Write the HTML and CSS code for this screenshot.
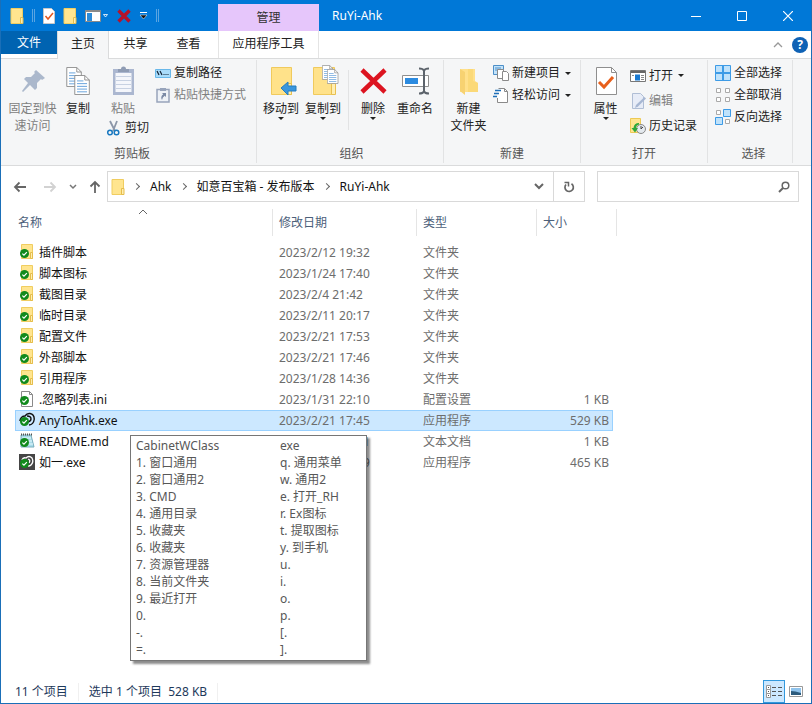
FILE: index.html
```html
<!DOCTYPE html>
<html lang="zh-CN">
<head>
    <meta charset="UTF-8">
    <meta name="viewport" content="width=device-width, initial-scale=1.0">
    <title>RuYi-Ahk</title>
    <link rel="stylesheet" href="styles.css">
</head>
<body>

<!-- Shared icons -->
<svg class="sprite" aria-hidden="true">
    <symbol id="folder" viewBox="0 0 14 16">
        <path d="M1 .5h11.5v15H1z" fill="#ffe58f" stroke="#f0cd60"/>
        <path d="M10.500 9.500h2.500v6h-2.500z" fill="#ffeeb0" stroke="#e5bd4c"/>
    </symbol>
    <symbol id="check" viewBox="0 0 10 10">
        <circle cx="5" cy="5" r="5" fill="#118a1c"/>
        <path d="M2.600 5.200l1.800 1.700 3.200-3.400" fill="none" stroke="#fff" stroke-width="1.300"/>
    </symbol>
    <symbol id="folder-ok" viewBox="0 0 16 16">
        <path d="M2.500 .5h11v14h-11z" fill="#ffe58f" stroke="#f0cd60"/>
        <path d="M11.500 8.500h2v6h-2z" fill="#ffeeb0" stroke="#e5bd4c"/>
        <use href="#check" x="1" y="5" width="9" height="9"/>
    </symbol>
    <symbol id="paper" viewBox="0 0 18 22">
        <path d="M.5 .5h11l5 5v16H.5z" fill="#fff" stroke="#8a8a8a"/>
        <path d="M11.500 .5v5h5" fill="none" stroke="#8a8a8a"/>
        <path d="M3 6.500h7M3 9.500h11M3 12.500h11M3 15.500h11M3 18.500h11" stroke="#5b9ad8"/>
    </symbol>
</svg>

<div class="window">

    <!-- Title bar -->
    <header class="titlebar">
        <div class="quick-access">
            <svg width="14" height="16"><use href="#folder"/></svg>
            <span class="qa-sep"></span>
            <button aria-label="属性">
                <svg width="12" height="16" viewBox="0 0 12 16"><path d="M.5 .5h8l3 3v12H.5z" fill="#fff" stroke="#c8c8c8"/><path d="M2.500 8l2.500 3 5-6" fill="none" stroke="#e2571e" stroke-width="1.500"/></svg>
            </button>
            <button aria-label="新建文件夹">
                <svg width="14" height="16"><use href="#folder"/></svg>
            </button>
            <button aria-label="窗格">
                <svg width="24" height="14" viewBox="0 0 24 14"><path d="M.5 1.500h15v11H.5z" fill="#fff" stroke="#8a8a8a"/><path d="M1 1h14v2H1z" fill="#8a8a8a"/><path d="M2 4h5v8H2z" fill="#2b8bd8"/><path d="M18.500 5.500l2 2.500 2-2.500z" fill="none" stroke="#fff" stroke-width=".8"/></svg>
            </button>
            <button aria-label="删除">
                <svg width="14" height="14" viewBox="0 0 14 14"><path d="M1.500 1.500l11 11M12.500 1.500l-11 11" stroke="#b5122b" stroke-width="3.400"/></svg>
            </button>
            <button aria-label="自定义快速访问工具栏">
                <svg width="9" height="9" viewBox="0 0 9 9"><path d="M1 1.500h7" stroke="#fff"/><path d="M1 4h7L4.500 8z" fill="#111" stroke="#fff" stroke-width=".5"/></svg>
            </button>
            <span class="qa-sep"></span>
        </div>
        <div class="context-tab">管理</div>
        <h1>RuYi-Ahk</h1>
        <div class="window-buttons">
            <button aria-label="最小化"><svg width="10" height="10" viewBox="0 0 10 10"><path d="M0 5.500h10" stroke="#fff"/></svg></button>
            <button aria-label="最大化"><svg width="10" height="10" viewBox="0 0 10 10"><path d="M.5 .5h9v9h-9z" fill="none" stroke="#fff"/></svg></button>
            <button aria-label="关闭"><svg width="10" height="10" viewBox="0 0 10 10"><path d="M0 0l10 10M10 0L0 10" stroke="#fff" stroke-width="1.200"/></svg></button>
        </div>
    </header>

    <!-- Ribbon tabs -->
    <nav class="tabs">
        <button class="tab tab-file">文件</button>
        <button class="tab tab-active">主页</button>
        <button class="tab">共享</button>
        <button class="tab">查看</button>
        <button class="tab tab-tools">应用程序工具</button>
        <div class="tabs-end">
            <button aria-label="最小化功能区"><svg width="10" height="6" viewBox="0 0 10 6"><path d="M1 5l4-4 4 4" fill="none" stroke="#999" stroke-width="1.300"/></svg></button>
            <button class="help" aria-label="帮助">?</button>
        </div>
    </nav>

    <!-- Ribbon -->
    <section class="ribbon">
        <div class="group group-clipboard">
            <div class="group-body">
                <button class="big big-wide" disabled>
                    <svg viewBox="0 0 32 32"><path d="M19 5l9 8-3 2-1-1-4 4v5l-2 2-5-5-7 7-1-1 6-8-4-4 2-2h5l4-4-1-1z" fill="#a4b2c8"/></svg>
                    <span>固定到快<br>速访问</span>
                </button>
                <button class="big">
                    <svg viewBox="0 0 32 32"><use href="#paper" x="4" y="2" width="17" height="20"/><use href="#paper" x="12" y="10" width="17" height="20"/></svg>
                    <span>复制</span>
                </button>
                <div class="stack stack-paste">
                    <button class="big" disabled>
                        <svg viewBox="0 0 32 32"><path d="M6 4h21v26H6z" fill="#a3b1cc"/><path d="M8.500 8h16v19h-16z" fill="#f4f7fc"/><path d="M11 7V4h3a2.500 2.500 0 0 1 5 0h3v3z" fill="#8593ad"/><path d="M9 11.500h15M9 15.500h15M9 19.500h15M9 23.500h15" stroke="#c3cde0"/></svg>
                        <span>粘贴</span>
                    </button>
                    <button class="small">
                        <svg viewBox="0 0 16 16"><path d="M4 1l5 10M11 1L7 11" stroke="#8b96a8" stroke-width="1.800"/><circle cx="4" cy="12.500" r="2.300" fill="none" stroke="#1878c0" stroke-width="1.500"/><circle cx="10.500" cy="12.500" r="2.300" fill="none" stroke="#1878c0" stroke-width="1.500"/></svg>
                        剪切
                    </button>
                </div>
                <div class="stack">
                    <button class="small">
                        <svg viewBox="0 0 16 16"><path d="M.5 4.500h15v8H.5z" fill="#a9dcfa" stroke="#69b8ea"/><path d="M2 6l2 4M5 6l2 4" stroke="#123" stroke-width="1.200"/><path d="M8.500 9.500h1M10.500 9.500h1M12.500 9.500h1" stroke="#123"/></svg>
                        复制路径
                    </button>
                    <button class="small" disabled>
                        <svg viewBox="0 0 16 16"><path d="M2 2.500h12V15H2z" fill="#eef2f8" stroke="#8e9cb5" stroke-width="1.500"/><path d="M5 1h6v3H5z" fill="#8e9cb5"/><path d="M7 6h4v4l-1.300-1.300Q7.500 10 7 13q-2-3 1.200-5.700z" fill="#6e7f9d"/></svg>
                        粘贴快捷方式
                    </button>
                </div>
            </div>
            <div class="group-name">剪贴板</div>
        </div>

        <div class="group group-organize">
            <div class="group-body">
                <button class="big">
                    <svg viewBox="0 0 32 32"><path d="M6.500 2.500h20v27h-20z" fill="#ffe28a" stroke="#f0ca5d"/><path d="M22.500 18.500h4v11h-4z" fill="#ffeeb3" stroke="#e8c050"/><path d="M16 23l7-6v4h8v5h-8v4z" fill="#3a96dd" stroke="#237dc0"/></svg>
                    <span>移动到</span><i class="arrow"></i>
                </button>
                <button class="big">
                    <svg viewBox="0 0 32 32"><path d="M6.500 2.500h21v27h-21z" fill="#ffe28a" stroke="#f0ca5d"/><path d="M24.500 18.500h4v11h-4z" fill="#ffeeb3" stroke="#e8c050"/><use href="#paper" x="15" y="0" width="12" height="15"/><use href="#paper" x="20" y="4" width="12" height="15"/></svg>
                    <span>复制到</span><i class="arrow"></i>
                </button>
                <span class="inner-sep"></span>
                <button class="big">
                    <svg viewBox="0 0 32 32"><path d="M5 5l23 22M28 5L5 27" stroke="#dc1420" stroke-width="4.500"/></svg>
                    <span>删除</span><i class="arrow"></i>
                </button>
                <button class="big">
                    <svg viewBox="0 0 32 32"><path d="M3.500 10.500h26v11h-26z" fill="#fff" stroke="#8f8f8f"/><path d="M6 13h13v6H6z" fill="#2c8be0"/><path d="M20 3.500q4 0 5 2 1-2 5-2M25 5v22M20 28.500q4 0 5-2 1 2 5 2" fill="none" stroke="#5c636b" stroke-width="2"/></svg>
                    <span>重命名</span>
                </button>
            </div>
            <div class="group-name">组织</div>
        </div>

        <div class="group group-new">
            <div class="group-body">
                <button class="big big-wide">
                    <svg viewBox="0 0 32 32"><path d="M7 4h15v12l3 2v9H7z" fill="#ffe08a"/><path d="M7 4l5 3v23l-5-4z" fill="#f7d271"/><path d="M20 4v12l5 2v9H15V4z" fill="#fbd978"/></svg>
                    <span>新建<br>文件夹</span>
                </button>
                <div class="stack">
                    <button class="small">
                        <svg viewBox="0 0 16 16"><path d="M.5 .5h10v9H.5z" fill="#c3e3fa" stroke="#4c8fc8"/><path d="M2 3h6M2 5h4" stroke="#4c8fc8"/><path d="M4.500 4.500h6v9h-6z" fill="#fff" stroke="#8a8a8a"/><path d="M9.500 6.500h4l2 2v7h-6z" fill="#fff" stroke="#8a8a8a"/></svg>
                        新建项目<i class="arrow"></i>
                    </button>
                    <button class="small">
                        <svg viewBox="0 0 16 16"><path d="M5.500 1.500h6l3 3v11h-10V11" fill="#fff" stroke="#8a8a8a"/><path d="M11.500 1.500v3h3" fill="none" stroke="#8a8a8a"/><path d="M2 3.500h6M1 6.500h5M0 9.500h4" stroke="#1f6fb8" stroke-width="1.300"/></svg>
                        轻松访问<i class="arrow"></i>
                    </button>
                </div>
            </div>
            <div class="group-name">新建</div>
        </div>

        <div class="group group-open">
            <div class="group-body">
                <button class="big big-wide">
                    <svg viewBox="0 0 32 32"><path d="M6.500 2.500h15l5 5v22h-20z" fill="#fff" stroke="#8f8f8f"/><path d="M21.500 2.500v5h5" fill="none" stroke="#8f8f8f"/><path d="M9 17l5 5 9-10" fill="none" stroke="#e8601c" stroke-width="3"/></svg>
                    <span>属性</span><i class="arrow"></i>
                </button>
                <div class="stack stack-loose">
                    <button class="small">
                        <svg viewBox="0 0 16 16"><path d="M.5 2.500h15v11H.5z" fill="#fff" stroke="#777"/><path d="M1 3h14v2H1z" fill="#666"/><path d="M5 6.500h5v6H5z" fill="#1878d0"/><path d="M11 7.500h3M11 9.500h3M11 11.500h3M2 7.500h2" stroke="#888"/></svg>
                        打开<i class="arrow"></i>
                    </button>
                    <button class="small" disabled>
                        <svg viewBox="0 0 16 16"><path d="M2.500 .5h8l3 3v12h-11z" fill="#e6ecf7" stroke="#a9b8d2"/><path d="M14.500 4l1.500 1.500-8 8L5 15l1-3z" fill="#9fb1d0"/></svg>
                        编辑
                    </button>
                    <button class="small">
                        <svg viewBox="0 0 16 16"><path d="M.5 .5h10v14H.5z" fill="#ffe58f" stroke="#edc954"/><circle cx="11" cy="11" r="4.500" fill="#e4e9ee" stroke="#888"/><path d="M11 8v3l2-2" fill="none" stroke="#444"/><path d="M9 5q-5 0-5.500 5H1.500l3.500 4.500L8 10H6q0-3 3-3.500z" fill="#2fa83a"/></svg>
                        历史记录
                    </button>
                </div>
            </div>
            <div class="group-name">打开</div>
        </div>

        <div class="group group-select">
            <div class="group-body">
                <div class="stack">
                    <button class="small">
                        <svg viewBox="0 0 16 16"><path d="M.5 .5h15v15H.5z" fill="#bfe2fb" stroke="#3d9be6"/><path d="M8 0v16M0 8h16" stroke="#3d9be6" stroke-width="2"/></svg>
                        全部选择
                    </button>
                    <button class="small">
                        <svg viewBox="0 0 16 16"><path d="M1.500 1.500h4v4h-4zM10.500 1.500h4v4h-4zM1.500 10.500h4v4h-4zM10.500 10.500h4v4h-4z" fill="#fff" stroke="#aaa"/></svg>
                        全部取消
                    </button>
                    <button class="small">
                        <svg viewBox="0 0 16 16"><path d="M1.500 1.500h4v4h-4zM10.500 10.500h4v4h-4z" fill="#fff" stroke="#aaa"/><path d="M8.500 .5h7v7h-7zM.5 8.500h7v7h-7z" fill="#bfe2fb" stroke="#3d9be6"/></svg>
                        反向选择
                    </button>
                </div>
            </div>
            <div class="group-name">选择</div>
        </div>
    </section>

    <!-- Navigation and address -->
    <div class="navbar">
        <div class="nav-buttons">
            <button aria-label="后退"><svg width="14" height="12" viewBox="0 0 14 12"><path d="M13 6H2M6.500 1.500L2 6l4.500 4.500" fill="none" stroke="#666" stroke-width="1.800"/></svg></button>
            <button aria-label="前进" disabled><svg width="14" height="12" viewBox="0 0 14 12"><path d="M1 6h11M7.500 1.500L12 6l-4.500 4.500" fill="none" stroke="#d2d2d2" stroke-width="1.800"/></svg></button>
            <button class="recent" aria-label="最近浏览的位置"><svg width="8" height="6" viewBox="0 0 8 6"><path d="M1 1l3 3 3-3" fill="none" stroke="#777" stroke-width="1.500"/></svg></button>
            <button aria-label="上移"><svg width="12" height="14" viewBox="0 0 12 14"><path d="M6 13V2M1.500 6.500L6 2l4.500 4.500" fill="none" stroke="#666" stroke-width="1.800"/></svg></button>
        </div>
        <div class="address">
            <svg width="14" height="16"><use href="#folder"/></svg>
            <span class="chevron"></span>
            <a href="#">Ahk</a>
            <span class="chevron"></span>
            <a href="#">如意百宝箱 - 发布版本</a>
            <span class="chevron"></span>
            <a href="#">RuYi-Ahk</a>
            <button class="address-drop" aria-label="以前的位置"><svg width="10" height="7" viewBox="0 0 10 7"><path d="M1 1l4 4 4-4" fill="none" stroke="#666" stroke-width="2"/></svg></button>
            <button class="refresh" aria-label="刷新"><svg width="12" height="12" viewBox="0 0 12 12"><path d="M8.500 2.800A4.200 4.200 0 1 1 3 3.500" fill="none" stroke="#666" stroke-width="1.700"/><path d="M1.500 1.500h4v4" fill="none" stroke="#666" stroke-width="1.500"/></svg></button>
        </div>
        <div class="search">
            <input type="text" aria-label="搜索">
            <svg width="12" height="12" viewBox="0 0 12 12"><circle cx="7.500" cy="4.500" r="3.300" fill="none" stroke="#666" stroke-width="1.500"/><path d="M5 7l-4 4" stroke="#666" stroke-width="2"/></svg>
        </div>
    </div>

    <!-- File list -->
    <main class="files">
        <table>
            <colgroup>
                <col class="col-name">
                <col class="col-date">
                <col class="col-type">
                <col class="col-size">
                <col class="col-end">
            </colgroup>
            <thead>
                <tr>
                    <th class="sorted">名称<svg width="10" height="6" viewBox="0 0 10 6"><path d="M1 5l4-4 4 4" fill="none" stroke="#666"/></svg></th>
                    <th>修改日期</th>
                    <th>类型</th>
                    <th colspan="2">大小</th>
                </tr>
            </thead>
            <tbody>
                <tr><td><svg><use href="#folder-ok"/></svg>插件脚本</td><td>2023/2/12 19:32</td><td>文件夹</td><td></td></tr>
                <tr><td><svg><use href="#folder-ok"/></svg>脚本图标</td><td>2023/1/24 17:40</td><td>文件夹</td><td></td></tr>
                <tr><td><svg><use href="#folder-ok"/></svg>截图目录</td><td>2023/2/4 21:42</td><td>文件夹</td><td></td></tr>
                <tr><td><svg><use href="#folder-ok"/></svg>临时目录</td><td>2023/2/11 20:17</td><td>文件夹</td><td></td></tr>
                <tr><td><svg><use href="#folder-ok"/></svg>配置文件</td><td>2023/2/21 17:53</td><td>文件夹</td><td></td></tr>
                <tr><td><svg><use href="#folder-ok"/></svg>外部脚本</td><td>2023/2/21 17:46</td><td>文件夹</td><td></td></tr>
                <tr><td><svg><use href="#folder-ok"/></svg>引用程序</td><td>2023/1/28 14:36</td><td>文件夹</td><td></td></tr>
                <tr>
                    <td><svg viewBox="0 0 16 16"><path d="M2.500 .5h8l3 3v12h-11z" fill="#fff" stroke="#8a8a8a"/><path d="M10.500 .5v3h3" fill="none" stroke="#8a8a8a"/><use href="#check" x="1" y="5" width="9" height="9"/></svg>.忽略列表.ini</td>
                    <td>2023/1/31 22:10</td><td>配置设置</td><td>1 KB</td>
                </tr>
                <tr class="selected">
                    <td><svg viewBox="0 0 16 16"><path d="M.8 9Q2 4 6 4q2-3 5-2.500 4.500 1 4.200 6-.7 5-5.200 5.500M8 4q4 0 4 3 0 2-3 3" fill="none" stroke="#111" stroke-width="1.400"/><use href="#check" x="1" y="5" width="9" height="9"/></svg>AnyToAhk.exe</td>
                    <td>2023/2/21 17:45</td><td>应用程序</td><td>529 KB</td>
                </tr>
                <tr>
                    <td><svg viewBox="0 0 16 16"><path d="M2 2h10l3 12H2z" fill="#a9dcea" stroke="#78aebd"/><path d="M3 5h9M4 8h9M5 11h9" stroke="#e6f7fb"/><path d="M2 1.500h11" stroke="#555" stroke-width="2" stroke-dasharray="1 1"/><use href="#check" x="1" y="5" width="9" height="9"/></svg>README.md</td>
                    <td>2023/2/21 17:41</td><td>文本文档</td><td>1 KB</td>
                </tr>
                <tr>
                    <td><svg viewBox="0 0 16 16"><path d="M0 0h16v16H0z" fill="#454545"/><path d="M3 6q1-3 4-2 3-3 6 0 2 4-1 7-1 1-3 1M9 5q3 1 1 4" fill="none" stroke="#fff" stroke-width="1.300"/><use href="#check" x="1" y="5" width="9" height="9"/></svg>如一.exe</td>
                    <td>2023/2/21 17:39</td><td>应用程序</td><td>465 KB</td>
                </tr>
            </tbody>
        </table>

        <!-- Shortcut tip, floats over the list -->
        <div class="tip" role="tooltip">
            <ul>
                <li>CabinetWClass</li>
                <li>1. 窗口通用</li>
                <li>2. 窗口通用2</li>
                <li>3. CMD</li>
                <li>4. 通用目录</li>
                <li>5. 收藏夹</li>
                <li>6. 收藏夹</li>
                <li>7. 资源管理器</li>
                <li>8. 当前文件夹</li>
                <li>9. 最近打开</li>
                <li>0.</li>
                <li>-.</li>
                <li>=.</li>
            </ul>
            <ul>
                <li>exe</li>
                <li>q. 通用菜单</li>
                <li>w. 通用2</li>
                <li>e. 打开_RH</li>
                <li>r. Ex图标</li>
                <li>t. 提取图标</li>
                <li>y. 到手机</li>
                <li>u.</li>
                <li>i.</li>
                <li>o.</li>
                <li>p.</li>
                <li>[.</li>
                <li>].</li>
            </ul>
        </div>
    </main>

    <!-- Status bar -->
    <footer class="status">
        <span>11 个项目</span>
        <span>选中 1 个项目&nbsp; 528 KB</span>
        <div class="views">
            <button class="view-active" aria-label="详细信息"><svg width="16" height="14" viewBox="0 0 16 14"><path d="M.5 .5h4v4h-4zM.5 4.500h4v4h-4zM.5 8.500h4v4h-4z" fill="#fff" stroke="#999"/><path d="M2 2.500h1M2 6.500h1M2 10.500h1M6 2.500h4M12 2.500h4M6 6.500h4M12 6.500h4M6 10.500h4M12 10.500h4" stroke="#555"/></svg></button>
            <button aria-label="大图标"><svg width="14" height="12" viewBox="0 0 14 12"><path d="M.5 .5h13v10H.5z" fill="#fff" stroke="#999"/><path d="M2 2h10v7H2z" fill="#8fc3ec"/><path d="M2 5q4 0 10 2v2H2z" fill="#2c5b7c"/></svg></button>
        </div>
    </footer>
</div>

</body>
</html>
```
FILE: styles.css
```css
* {
    margin: 0;
    padding: 0;
    box-sizing: border-box;
}

body {
    font-family: "Noto Sans", "Noto Sans CJK SC", sans-serif;
    font-size: 12px;
    line-height: 18px;
    color: #222;
    background-color: #fff;
}

button {
    font: inherit;
    color: inherit;
    background: none;
    border: none;
    white-space: nowrap;
}

svg {
    display: block;
    flex: none;
}

a {
    color: inherit;
    text-decoration: none;
}

ul {
    list-style: none;
}

.sprite {
    position: absolute;
    width: 0;
    height: 0;
}

.window {
    min-height: 100vh;
    display: flex;
    flex-direction: column;
    border: 1px solid #1a6fb8;
    border-top: none;
}

/* Title bar */
.titlebar {
    display: flex;
    height: 31px;
    background-color: #0078d7;
    color: #fff;
}

.quick-access {
    display: flex;
    align-items: center;
    gap: 8px;
    width: 217px;
    padding-left: 9px;
}

.qa-sep {
    width: 3px;
    height: 13px;
    border: 1px solid #5aa5e2;
    border-width: 0 1px;
}

.context-tab {
    width: 101px;
    margin-top: 4px;
    padding-top: 5px;
    text-align: center;
    color: #333;
    background-color: #e6c6fb;
}

.titlebar h1 {
    flex: 1;
    padding-left: 13px;
    font-size: 12px;
    font-weight: normal;
    line-height: 31px;
}

.window-buttons {
    display: flex;
}

.window-buttons button {
    width: 46px;
    display: flex;
    align-items: center;
    justify-content: center;
}

/* Tabs */
.tabs {
    display: flex;
    height: 28px;
    border-bottom: 1px solid #dadbdc;
}

.tab {
    width: 53px;
    padding-bottom: 2px;
}

.tab-file {
    width: 56px;
    height: 23px;
    padding: 0;
    color: #fff;
    background-color: #0063b1;
}

.tab-active {
    width: 52px;
    height: 28px;
    background-color: #f5f6f7;
    border: 1px solid #dadbdc;
    border-width: 0 1px;
}

.tab-tools {
    width: 101px;
    margin-left: 3px;
    border: 1px solid #e4e4e4;
    border-width: 0 1px;
}

.tabs-end {
    display: flex;
    align-items: center;
    gap: 9px;
    margin-left: auto;
    padding-right: 3px;
}

.help {
    width: 16px;
    height: 16px;
    border-radius: 50%;
    font-weight: bold;
    line-height: 16px;
    color: #fff;
    background-color: #0f62b5;
}

/* Ribbon */
.ribbon {
    display: flex;
    height: 107px;
    background-color: #f5f6f7;
    border-bottom: 1px solid #dadbdc;
}

.group {
    display: flex;
    flex-direction: column;
    margin: 1px 0 2px;
    border-right: 1px solid #e2e3e4;
}

.group-clipboard {
    width: 256px;
    padding-left: 7px;
}

.group-organize {
    width: 187px;
    padding-left: 3px;
}

.group-new {
    width: 137px;
}

.group-open {
    width: 127px;
}

.group-select {
    width: 85px;
    padding-left: 7px;
}

.group-body {
    display: flex;
    flex: 1;
}

.group-name {
    text-align: center;
    color: #555;
}

.big {
    display: flex;
    flex-direction: column;
    align-items: center;
    width: 42px;
    padding-top: 5px;
    line-height: 17px;
}

.big-wide {
    width: 49px;
}

.big svg {
    width: 32px;
    height: 32px;
    margin-bottom: 3px;
}

.big:disabled,
.small:disabled {
    color: #808080;
}

.big:disabled svg,
.small:disabled svg {
    opacity: 0.9;
}

.arrow {
    border: 3px solid transparent;
    border-top-color: #222;
    border-bottom: none;
}

.small {
    display: flex;
    align-items: center;
    gap: 3px;
    height: 22px;
}

.small svg {
    width: 16px;
    height: 16px;
}

.small .arrow {
    margin-left: 2px;
}

.stack {
    display: flex;
    flex-direction: column;
    padding-top: 2px;
}

.group-clipboard .big + .stack {
    padding-left: 3px;
}

.stack-paste {
    width: 56px;
    padding-top: 0;
}

.stack-paste .small {
    padding-left: 4px;
}

.stack-loose {
    padding-top: 3px;
}

.stack-loose .small {
    height: 25px;
}

.inner-sep {
    width: 1px;
    height: 60px;
    margin: 10px 3px 0 4px;
    background-color: #e2e3e4;
}

/* Navigation bar */
.navbar {
    display: flex;
    height: 31px;
    margin: 5px 12px 0;
}

.nav-buttons {
    display: flex;
    align-items: center;
    gap: 16px;
    width: 94px;
}

.nav-buttons .recent {
    margin: 0 -4px;
}

.address {
    display: flex;
    flex: 1;
    align-items: center;
    gap: 9px;
    height: 31px;
    padding-left: 3px;
    color: #111;
    border: 1px solid #d9d9d9;
}

.chevron {
    width: 5px;
    height: 5px;
    margin-right: 2px;
    border: 1px solid #666;
    border-width: 1px 1px 0 0;
    transform: rotate(45deg);
}

.address-drop {
    margin-left: auto;
}

.refresh {
    display: flex;
    align-items: center;
    justify-content: center;
    width: 31px;
    height: 29px;
    border-left: 1px solid #d9d9d9;
}

.search {
    display: flex;
    align-items: center;
    width: 202px;
    height: 31px;
    margin-left: 12px;
    padding-right: 8px;
    border: 1px solid #d9d9d9;
}

.search input {
    flex: 1;
    min-width: 0;
    height: 100%;
    padding: 0 6px;
    font: inherit;
    border: none;
    outline: none;
}

/* File list */
.files {
    position: relative;
    flex: 1;
    padding: 7px 14px;
}

table {
    width: 602px;
    table-layout: fixed;
    border-collapse: separate;
    border-spacing: 0;
}

.col-name {
    width: 258px;
}

.col-date {
    width: 144px;
}

.col-type {
    width: 120px;
}

.col-size {
    width: 76px;
}

.col-end {
    width: 4px;
}

th {
    height: 27px;
    padding-left: 6px;
    font-weight: normal;
    text-align: left;
    color: #4c607a;
    border-right: 1px solid #e5e5e5;
}

th.sorted {
    position: relative;
    padding-left: 3px;
}

/* sort mark sits on the top edge of the heading */
th.sorted svg {
    position: absolute;
    top: 0;
    left: calc(50% - 6px);
}

tbody::before {
    content: "";
    display: block;
    height: 6px;
}

td {
    height: 21px;
    padding-left: 6px;
    line-height: 19px;
    color: #6d6d6d;
    white-space: nowrap;
    border: 1px solid transparent;
    border-width: 1px 0;
}

td:first-child {
    padding-left: 4px;
    color: #111;
}

td:nth-child(4) {
    padding-right: 4px;
    text-align: right;
}

td svg {
    display: inline-block;
    width: 16px;
    height: 16px;
    margin-right: 4px;
    vertical-align: -3px;
}

.selected td {
    background-color: #cce8ff;
    border-color: #99d1ff;
}

.selected td:first-child {
    border-left-width: 1px;
    padding-left: 3px;
}

.selected td:nth-child(4) {
    border-right-width: 1px;
    padding-right: 3px;
}

/* Shortcut tip */
.tip {
    position: absolute;
    top: 233px;
    left: 129px;
    display: grid;
    grid-template-columns: 144px 1fr;
    width: 237px;
    padding: 1px 5px 2px;
    line-height: 17px;
    color: #575757;
    background-color: #fff;
    border: 1px solid #767676;
    box-shadow: 3px 3px 2px rgba(0, 0, 0, 0.45);
}

/* Status bar */
.status {
    display: flex;
    align-items: center;
    height: 23px;
    padding-left: 14px;
    color: #1e395b;
}

.status span {
    margin-right: 10px;
    padding-right: 10px;
    border-right: 1px solid #f0f0f0;
}

.views {
    display: flex;
    margin-left: auto;
    padding-right: 4px;
}

.views button {
    display: flex;
    align-items: center;
    justify-content: center;
    width: 22px;
    height: 23px;
}

.views .view-active {
    background-color: #cce8ff;
    border: 1px solid #3399dd;
}
```
